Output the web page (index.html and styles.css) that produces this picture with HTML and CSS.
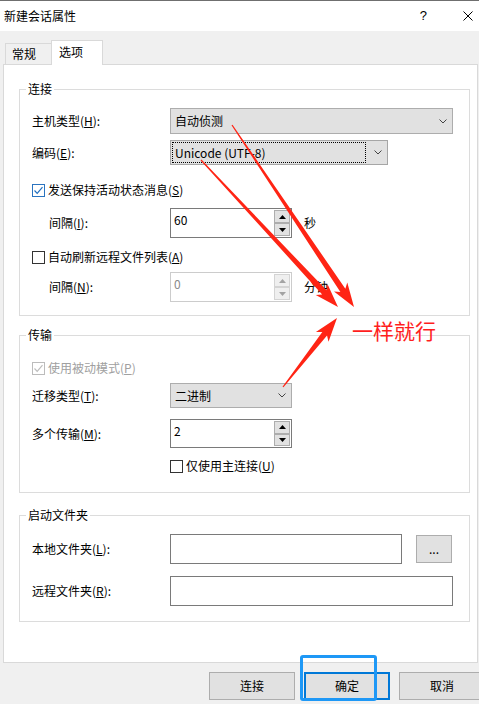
FILE: index.html
```html
<!DOCTYPE html>
<html lang="zh-CN">
<head>
<meta charset="utf-8">
<title>新建会话属性</title>
<link rel="stylesheet" href="styles.css">
</head>
<body>
<div class="titlebar">
  <span class="title">新建会话属性</span>
  <span class="help">?</span>
  <svg class="close" width="10" height="10" viewBox="0 0 10 10"><path d="M0.5 0.5 L9.5 9.5 M9.5 0.5 L0.5 9.5" stroke="#000" stroke-width="1" fill="none"/></svg>
</div>
<div class="tabs">
  <div class="tab">常规</div>
  <div class="tab active">选项</div>
</div>
<div class="panel">
  <div class="group g-conn">
    <div class="legend">连接</div>
    <div class="row r-host">
      <span class="lbl">主机类型(<u>H</u>):</span>
      <div class="combo combo-host"><span class="ctext">自动侦测</span><svg class="chev" width="8" height="5" viewBox="0 0 8 5"><path d="M0.5 0.5 L4 4 L7.5 0.5" stroke="#444" fill="none"/></svg></div>
    </div>
    <div class="row r-enc">
      <span class="lbl">编码(<u>E</u>):</span>
      <div class="combo combo-enc"><span class="focus">Unicode (UTF-8)</span><svg class="chev" width="8" height="5" viewBox="0 0 8 5"><path d="M0.5 0.5 L4 4 L7.5 0.5" stroke="#444" fill="none"/></svg></div>
    </div>
    <div class="row r-check r-keep">
      <span class="box checked"><svg width="11" height="11" viewBox="0 0 11 11"><path d="M1.5 5.5 L4.2 8.3 L9.5 2.2" stroke="#1f6fc0" stroke-width="1.2" fill="none"/></svg></span>
      <span class="ctl">发送保持活动状态消息(<u>S</u>)</span>
    </div>
    <div class="row r-spin r-int1">
      <span class="lbl sub">间隔(<u>I</u>):</span>
      <div class="spin"><span class="val">60</span><span class="btns"><span class="sb"><svg width="7" height="4" viewBox="0 0 7 4"><path d="M0 4 L3.5 0 L7 4 Z" fill="#000"/></svg></span><span class="sb"><svg width="7" height="4" viewBox="0 0 7 4"><path d="M0 0 L3.5 4 L7 0 Z" fill="#000"/></svg></span></span></div>
      <span class="unit">秒</span>
    </div>
    <div class="row r-check r-auto">
      <span class="box"></span>
      <span class="ctl">自动刷新远程文件列表(<u>A</u>)</span>
    </div>
    <div class="row r-spin r-int2">
      <span class="lbl sub">间隔(<u>N</u>):</span>
      <div class="spin disabled"><span class="val">0</span><span class="btns"><span class="sb"><svg width="7" height="4" viewBox="0 0 7 4"><path d="M0 4 L3.5 0 L7 4 Z" fill="#a3a3a3"/></svg></span><span class="sb"><svg width="7" height="4" viewBox="0 0 7 4"><path d="M0 0 L3.5 4 L7 0 Z" fill="#a3a3a3"/></svg></span></span></div>
      <span class="unit">分钟</span>
    </div>
  </div>

  <div class="group g-xfer">
    <div class="legend">传输</div>
    <div class="row r-check r-pasv">
      <span class="box checked dis"><svg width="11" height="11" viewBox="0 0 11 11"><path d="M1.5 5.5 L4.2 8.3 L9.5 2.2" stroke="#bcbcbc" stroke-width="1.2" fill="none"/></svg></span>
      <span class="ctl dtext">使用被动模式(<u>P</u>)</span>
    </div>
    <div class="row r-type">
      <span class="lbl">迁移类型(<u>T</u>):</span>
      <div class="combo combo-type"><span class="ctext">二进制</span><svg class="chev" width="8" height="5" viewBox="0 0 8 5"><path d="M0.5 0.5 L4 4 L7.5 0.5" stroke="#444" fill="none"/></svg></div>
    </div>
    <div class="row r-spin r-multi">
      <span class="lbl">多个传输(<u>M</u>):</span>
      <div class="spin"><span class="val">2</span><span class="btns"><span class="sb"><svg width="7" height="4" viewBox="0 0 7 4"><path d="M0 4 L3.5 0 L7 4 Z" fill="#000"/></svg></span><span class="sb"><svg width="7" height="4" viewBox="0 0 7 4"><path d="M0 0 L3.5 4 L7 0 Z" fill="#000"/></svg></span></span></div>
    </div>
    <div class="row r-check r-main">
      <span class="box"></span>
      <span class="ctl">仅使用主连接(<u>U</u>)</span>
    </div>
  </div>

  <div class="group g-start">
    <div class="legend">启动文件夹</div>
    <div class="row r-field r-local">
      <span class="lbl">本地文件夹(<u>L</u>):</span>
      <div class="field field-local"></div>
      <div class="browse">...</div>
    </div>
    <div class="row r-field r-remote">
      <span class="lbl">远程文件夹(<u>R</u>):</span>
      <div class="field field-remote"></div>
    </div>
  </div>
</div>
<div class="buttons">
  <div class="btn">连接</div>
  <div class="btn default">确定</div>
  <div class="btn">取消</div>
</div>

<svg class="arrows" width="479" height="704" viewBox="0 0 479 704">
  <polygon fill="#ff2414" points="231.5,125.33 340.37,292.05 333.98,291.52 354,307 347.28,282.6 345.35,288.71 232.5,124.67"/>
  <polygon fill="#ff2414" points="200.56,160.41 322.16,294.41 315.77,294.89 338,307 327.49,283.97 326.56,290.31 201.44,159.59"/>
  <polygon fill="#ff2414" points="283.47,387.37 327.04,335.61 328.52,341.84 337,318 315.92,331.98 322.32,331.91 282.53,386.63"/>
</svg>
<div class="note">一样就行</div>
<div class="highlight"></div>
</body>
</html>
```

FILE: styles.css
```css
body {
  margin: 0;
  width: 479px;
  height: 704px;
  overflow: hidden;
  background: #f0f0f0;
  font-family: "Noto Sans CJK SC", "Noto Sans", sans-serif;
  font-size: 12px;
  line-height: 16px;
  color: #000;
  position: relative;
}

u { text-decoration: underline; text-underline-offset: 1px; }

.titlebar {
  height: 30px;
  border-top: 1px solid #6f6f6f;
  background: #fff;
  display: flex;
  align-items: center;
  padding-left: 4px;
}
.title { flex: 1; }
.help { font-size: 13px; margin-right: 36px; font-family: "Liberation Sans", sans-serif; }
.close { margin-right: 6px; }

.tabs {
  height: 33px;
  display: flex;
  align-items: flex-end;
  padding-left: 5px;
}
.tab {
  width: 47px;
  height: 21px;
  box-sizing: border-box;
  border: 1px solid #d9d9d9;
  border-bottom: none;
  background: #f0f0f0;
  padding-left: 6px;
  line-height: 20px;
}
.tab.active {
  width: 52px;
  height: 25px;
  margin-left: -1px;
  margin-bottom: -1px;
  background: #fff;
  position: relative;
  z-index: 1;
  padding-left: 7px;
  line-height: 21px;
}

.panel {
  margin-left: 3px;
  width: 475px;
  height: 599px;
  box-sizing: border-box;
  border: 1px solid #d9d9d9;
  background: #fff;
  padding: 24px 0 0 15px;
}

.group {
  width: 451px;
  box-sizing: border-box;
  border: 1px solid #dcdcdc;
  padding-left: 12px;
  display: flex;
  flex-direction: column;
}
.g-conn { height: 227px; }
.g-xfer { height: 158px; margin-top: 19px; }
.g-start { height: 107px; margin-top: 22px; }

.legend {
  align-self: flex-start;
  margin: -9px 0 0 -6px;
  padding: 0 2px;
  height: 16px;
  background: #fff;
}

.row { display: flex; align-items: center; }
.lbl { width: 138px; flex: none; }
.lbl.sub { padding-left: 17px; width: 121px; }

.r-host { margin-top: 11px; height: 26px; }
.r-enc { margin-top: 6px; height: 25px; }
.r-keep { margin-top: 18px; height: 14px; }
.r-int1 { margin-top: 11px; height: 30px; }
.r-auto { margin-top: 12px; height: 14px; }
.r-int2 { margin-top: 8px; height: 30px; }

.r-pasv { margin-top: 18px; height: 14px; }
.r-type { margin-top: 8px; height: 25px; }
.r-multi { margin-top: 11px; height: 29px; }
.r-main { margin-top: 11px; height: 14px; padding-left: 138px; }

.r-local { margin-top: 11px; height: 30px; }
.r-remote { margin-top: 12px; height: 30px; }

.combo {
  height: 100%;
  box-sizing: border-box;
  background: #e1e1e1;
  border: 1px solid #adadad;
  display: flex;
  align-items: center;
  justify-content: space-between;
  padding: 0 5px 0 4px;
}
.combo-host { width: 283px; }
.combo-enc { width: 218px; padding: 1px 5px 1px 1px; border-color: #a6a6a6; }
.combo-type { width: 122px; }
.combo-enc .focus {
  flex: none;
  width: 194px;
  height: 100%;
  box-sizing: border-box;
  border: 1px dotted #000;
  padding-left: 2px;
  display: flex;
  align-items: center;
}

.box {
  width: 13px;
  height: 13px;
  box-sizing: border-box;
  border: 1px solid #333;
  background: #fff;
  flex: none;
  margin-right: 3px;
  display: flex;
  align-items: center;
  justify-content: center;
}
.box.checked { border-color: #2b74c0; }
.box.dis { border-color: #bcbcbc; }
.dtext { color: #a0a0a0; }

.spin {
  width: 122px;
  height: 100%;
  box-sizing: border-box;
  border: 1px solid #7a7a7a;
  display: flex;
  background: #fff;
}
.spin .val { flex: 1; padding: 3px 0 0 3px; }
.spin .btns {
  width: 17px;
  box-sizing: border-box;
  padding: 1px 1px 1px 0;
  display: flex;
  flex-direction: column;
}
.spin .sb {
  flex: 1;
  box-sizing: border-box;
  border: 1px solid #adadad;
  background: #e1e1e1;
  display: flex;
  align-items: center;
  justify-content: center;
}
.spin.disabled { border-color: #cccccc; }
.spin.disabled .val { color: #8a8a8a; }
.spin.disabled .sb { border-color: #d4d4d4; background: #efefef; }

.unit { margin-left: 12px; }

.field {
  height: 100%;
  box-sizing: border-box;
  border: 1px solid #7a7a7a;
  background: #fff;
}
.field-local { width: 232px; }
.field-remote { width: 283px; }
.browse {
  margin-left: 14px;
  width: 36px;
  height: 28px;
  box-sizing: border-box;
  background: #e1e1e1;
  border: 1px solid #adadad;
  display: flex;
  align-items: center;
  justify-content: center;
  line-height: 12px;
}

.buttons {
  margin-top: 9px;
  padding-left: 209px;
  display: flex;
  gap: 9px;
}
.btn {
  width: 86px;
  height: 28px;
  flex: none;
  box-sizing: border-box;
  background: #e1e1e1;
  border: 1px solid #adadad;
  display: flex;
  align-items: center;
  justify-content: center;
}
.btn.default {
  border-color: #0078d7;
  box-shadow: inset 0 0 0 1px #0078d7;
}

.arrows {
  position: absolute;
  left: 0;
  top: 0;
  pointer-events: none;
}
.note {
  position: absolute;
  left: 352px;
  top: 318px;
  font-size: 21px;
  line-height: 24px;
  color: #ff1e1e;
}
.highlight {
  position: absolute;
  left: 300px;
  top: 655px;
  width: 77px;
  height: 46px;
  box-sizing: border-box;
  border: 3px solid #1e98f6;
  border-radius: 3px;
}
```
